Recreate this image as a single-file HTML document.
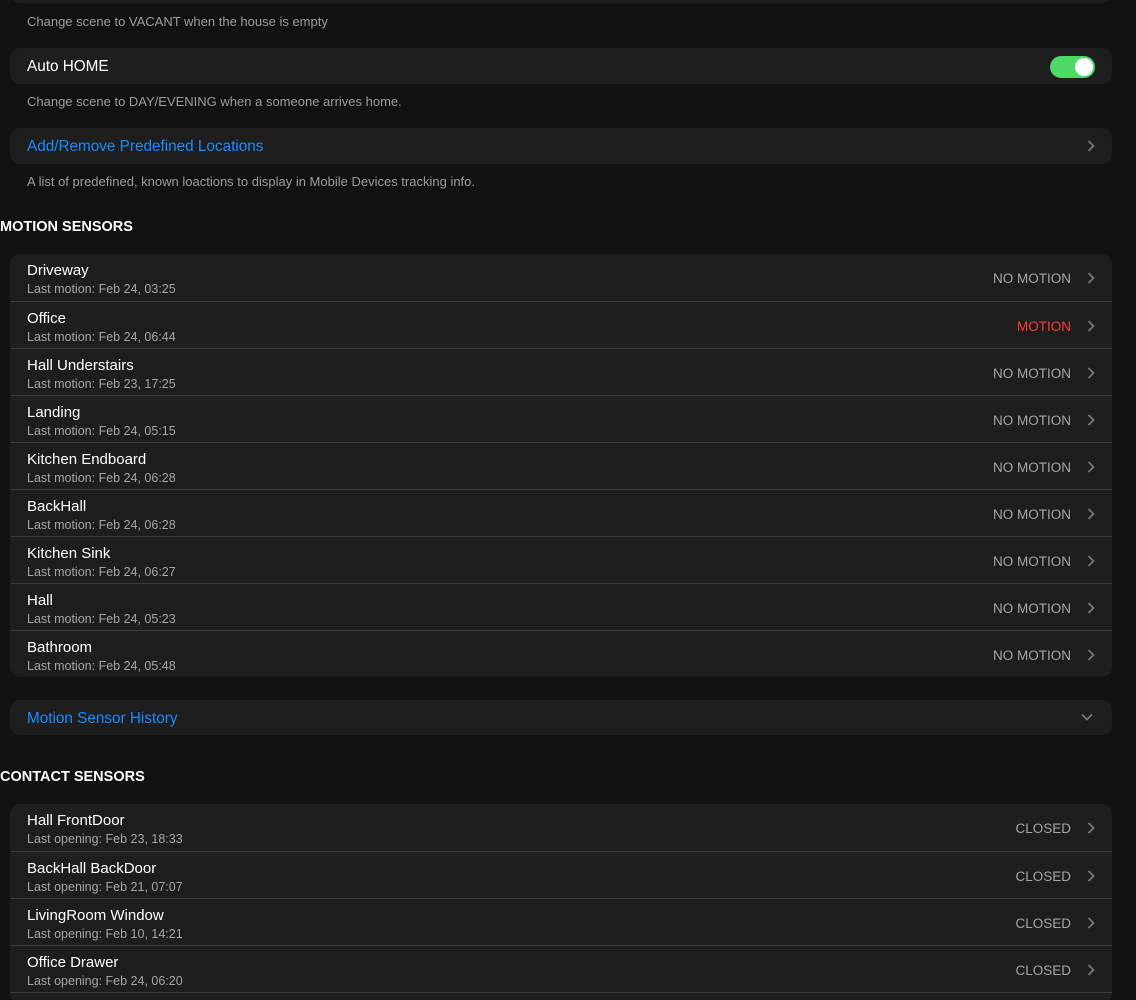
<!DOCTYPE html>
<html><head><meta charset="utf-8"><style>
*{box-sizing:border-box;margin:0;padding:0}
html{height:1000px;overflow:hidden}
body{width:1136px;height:1000px;background:#121212;font-family:"Liberation Sans",sans-serif;color:#fff;position:relative;overflow:hidden}
.card{position:absolute;left:10px;width:1102px;background:#1e1e1e;border-radius:10px;overflow:hidden}
.desc{position:absolute;left:27px;font-size:13px;color:#9c9c9c}
.head{position:absolute;left:0;font-size:14.5px;font-weight:bold;color:#fff}
.single{height:36px}
.single .t{position:absolute;left:17px;top:10px;font-size:15.3px}
.blue{color:#1a8cff}
.row{position:relative;height:47px;border-top:1px solid #3c3c3c}
.row:first-child{border-top:none}
.row .n{position:absolute;left:17px;top:8px;font-size:15px;color:#fff}
.row .s{position:absolute;left:17px;top:28px;font-size:12.5px;color:#a5a5a5}
.row .v{position:absolute;right:41px;top:17px;font-size:13.5px;color:#a5a5a5}
.red{color:#ff3b30!important}
.chev{position:absolute;right:17px;width:8px;height:14px}
.row .chev{top:17px}
</style></head><body>
<div class="card" style="top:-30px;height:33px"></div>
<div class="desc" style="top:14px">Change scene to VACANT when the house is empty</div>
<div class="card single" style="top:48px"><div class="t">Auto HOME</div>
<div style="position:absolute;left:1040px;top:8px;width:45px;height:22px;border-radius:11px;background:#4cd964"><div style="position:absolute;right:2px;top:2px;width:18px;height:18px;border-radius:9px;background:#fff"></div></div></div>
<div class="desc" style="top:94px">Change scene to DAY/EVENING when a someone arrives home.</div>
<div class="card single" style="top:128px"><div class="t blue">Add/Remove Predefined Locations</div>
<svg class="chev" style="top:11px" viewBox="0 0 8 14"><path d="M1.5 2l5 5-5 5" stroke="#777" stroke-width="1.8" fill="none"/></svg></div>
<div class="desc" style="top:174px">A list of predefined, known loactions to display in Mobile Devices tracking info.</div>
<div class="head" style="top:219px">MOTION SENSORS</div>
<div class="card" style="top:254px;height:423px">
<div class="row"><div class="n">Driveway</div><div class="s">Last motion: Feb 24, 03:25</div><div class="v">NO MOTION</div><svg class="chev" viewBox="0 0 8 14"><path d="M1.5 2l5 5-5 5" stroke="#777" stroke-width="1.8" fill="none"/></svg></div>
<div class="row"><div class="n">Office</div><div class="s">Last motion: Feb 24, 06:44</div><div class="v red">MOTION</div><svg class="chev" viewBox="0 0 8 14"><path d="M1.5 2l5 5-5 5" stroke="#777" stroke-width="1.8" fill="none"/></svg></div>
<div class="row"><div class="n">Hall Understairs</div><div class="s">Last motion: Feb 23, 17:25</div><div class="v">NO MOTION</div><svg class="chev" viewBox="0 0 8 14"><path d="M1.5 2l5 5-5 5" stroke="#777" stroke-width="1.8" fill="none"/></svg></div>
<div class="row"><div class="n">Landing</div><div class="s">Last motion: Feb 24, 05:15</div><div class="v">NO MOTION</div><svg class="chev" viewBox="0 0 8 14"><path d="M1.5 2l5 5-5 5" stroke="#777" stroke-width="1.8" fill="none"/></svg></div>
<div class="row"><div class="n">Kitchen Endboard</div><div class="s">Last motion: Feb 24, 06:28</div><div class="v">NO MOTION</div><svg class="chev" viewBox="0 0 8 14"><path d="M1.5 2l5 5-5 5" stroke="#777" stroke-width="1.8" fill="none"/></svg></div>
<div class="row"><div class="n">BackHall</div><div class="s">Last motion: Feb 24, 06:28</div><div class="v">NO MOTION</div><svg class="chev" viewBox="0 0 8 14"><path d="M1.5 2l5 5-5 5" stroke="#777" stroke-width="1.8" fill="none"/></svg></div>
<div class="row"><div class="n">Kitchen Sink</div><div class="s">Last motion: Feb 24, 06:27</div><div class="v">NO MOTION</div><svg class="chev" viewBox="0 0 8 14"><path d="M1.5 2l5 5-5 5" stroke="#777" stroke-width="1.8" fill="none"/></svg></div>
<div class="row"><div class="n">Hall</div><div class="s">Last motion: Feb 24, 05:23</div><div class="v">NO MOTION</div><svg class="chev" viewBox="0 0 8 14"><path d="M1.5 2l5 5-5 5" stroke="#777" stroke-width="1.8" fill="none"/></svg></div>
<div class="row"><div class="n">Bathroom</div><div class="s">Last motion: Feb 24, 05:48</div><div class="v">NO MOTION</div><svg class="chev" viewBox="0 0 8 14"><path d="M1.5 2l5 5-5 5" stroke="#777" stroke-width="1.8" fill="none"/></svg></div>
</div>
<div class="card single" style="top:700px;height:35px"><div class="t blue">Motion Sensor History</div>
<svg style="position:absolute;right:18px;top:13px;width:14px;height:8px" viewBox="0 0 14 8"><path d="M2 1.5l5 5 5-5" stroke="#777" stroke-width="1.8" fill="none"/></svg></div>
<div class="head" style="top:769px">CONTACT SENSORS</div>
<div class="card" style="top:804px;height:200px">
<div class="row"><div class="n">Hall FrontDoor</div><div class="s">Last opening: Feb 23, 18:33</div><div class="v">CLOSED</div><svg class="chev" viewBox="0 0 8 14"><path d="M1.5 2l5 5-5 5" stroke="#777" stroke-width="1.8" fill="none"/></svg></div>
<div class="row"><div class="n">BackHall BackDoor</div><div class="s">Last opening: Feb 21, 07:07</div><div class="v">CLOSED</div><svg class="chev" viewBox="0 0 8 14"><path d="M1.5 2l5 5-5 5" stroke="#777" stroke-width="1.8" fill="none"/></svg></div>
<div class="row"><div class="n">LivingRoom Window</div><div class="s">Last opening: Feb 10, 14:21</div><div class="v">CLOSED</div><svg class="chev" viewBox="0 0 8 14"><path d="M1.5 2l5 5-5 5" stroke="#777" stroke-width="1.8" fill="none"/></svg></div>
<div class="row"><div class="n">Office Drawer</div><div class="s">Last opening: Feb 24, 06:20</div><div class="v">CLOSED</div><svg class="chev" viewBox="0 0 8 14"><path d="M1.5 2l5 5-5 5" stroke="#777" stroke-width="1.8" fill="none"/></svg></div>
<div class="row"></div>
</div>
</body></html>
